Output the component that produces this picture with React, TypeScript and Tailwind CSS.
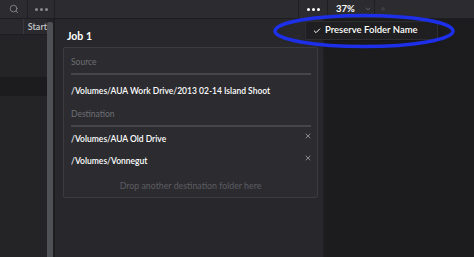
import { Search, ChevronDown, X, Check } from "lucide-react";

const font = { fontFamily: "Lato, 'Open Sans', sans-serif" };

function Dots({ className }: { className: string }) {
  return (
    <div className={`flex items-center gap-[2px] ${className}`}>
      <span className="w-[3px] h-[3px] rounded-full bg-current" />
      <span className="w-[3px] h-[3px] rounded-full bg-current" />
      <span className="w-[3px] h-[3px] rounded-full bg-current" />
    </div>
  );
}

export default function App() {
  return (
    <div className="relative w-[474px] h-[257px] overflow-hidden bg-[#1c1c1e] flex flex-col" style={font}>
      {/* top bar */}
      <div className="h-[19px] flex items-center bg-[#2c2c30] border-b border-[#1e1e21] shrink-0">
        <div className="w-[28px] h-full flex items-center justify-center border-r border-[#1f1f22]">
          <Search size={10} strokeWidth={2} className="text-[#8a8a90]" />
        </div>
        <div className="w-[27px] h-full flex items-center justify-center border-r border-[#1f1f22]">
          <Dots className="text-[#8a8a90]" />
        </div>
        <div className="flex-1" />
        <div className="w-[30px] h-full flex items-center justify-center border-l border-r border-[#1f1f22]">
          <Dots className="text-white" />
        </div>
        <div className="w-[47px] h-full flex items-center pl-[8px] gap-[9px] border-r border-[#1f1f22]">
          <span className="text-[9.5px] font-bold text-white">37%</span>
          <ChevronDown size={8} strokeWidth={2} className="text-[#7a7a80]" />
        </div>
        <div className="w-[99px] h-full flex items-center pl-[6px]">
          <span className="w-[4px] h-[4px] rounded-full bg-[#3c3c40]" />
        </div>
      </div>

      <div className="flex-1 flex">
        {/* left list */}
        <div className="w-[47px] flex flex-col bg-[#242427]">
          <div className="h-[16px] flex bg-[#2a2a2e] border-b border-[#1e1e21]">
            <div className="w-[24px] border-r border-[#38383c]" />
            <span className="pl-[4px] text-[9px] font-semibold text-[#c8c8cc] leading-[16px]">Start</span>
          </div>
          <div className="h-[42px]" />
          <div className="h-[19px] bg-[#1c1c1f]" />
        </div>
        {/* scrollbar */}
        <div className="w-[6px] bg-[#242427] pt-[3px] flex">
          <div className="flex-1 bg-[#505156] rounded-t-[2px]" />
        </div>
        <div className="w-[2px] bg-[#1e1e21]" />

        {/* middle panel */}
        <div className="w-[270px] bg-[#28282c] flex flex-col pl-[8px] pr-[5px] border-r-[2px] border-[#1f1f22]">
          <div className="h-[28px] flex items-center pl-[4px] pt-[8px]">
            <span className="text-[10.5px] font-bold text-white">Job 1</span>
          </div>
          <div className="h-[151px] bg-[#2c2c30] border border-[#3c3c40] rounded-[2px] px-[7px] flex flex-col">
            <div className="h-[25px] flex items-end pb-[4px] text-[8.5px] text-[#6e6e74]">Source</div>
            <div className="h-[2px] bg-[#46464a] mr-[-1px]" />
            <div className="h-[32px] flex items-center text-[8.5px] font-semibold text-white">
              /Volumes/AUA Work Drive/2013 02-14 Island Shoot
            </div>
            <div className="h-[15px] flex items-center text-[8.5px] text-[#6e6e74]">Destination</div>
            <div className="h-[2px] bg-[#46464a] mt-[3px] mr-[-1px]" />
            <div className="h-[22px] flex items-center justify-between text-[8.5px] font-semibold text-white">
              <span className="pt-[2px]">/Volumes/AUA Old Drive</span>
              <X size={8} strokeWidth={3} className="text-[#8a8a8e] mr-[-2px] mb-[5px]" />
            </div>
            <div className="h-[23px] flex items-center justify-between text-[8.5px] font-semibold text-white">
              <span className="pt-[2px]">/Volumes/Vonnegut</span>
              <X size={8} strokeWidth={3} className="text-[#8a8a8e] mr-[-2px] mb-[5px]" />
            </div>
            <div className="flex-1 flex items-center justify-center text-[8.8px] text-[#5c5c62] pt-[3px]">
              Drop another destination folder here
            </div>
          </div>
        </div>

        {/* right panel */}
        <div className="flex-1 bg-[#1c1c1e]" />
      </div>

      {/* dropdown menu */}
      <div className="absolute left-[305px] top-[21px] w-[133px] h-[19px] bg-[#1f1f21] border border-[#2e2e32] flex items-center pl-[7px] gap-[4px] shadow-md">
        <Check size={8} strokeWidth={3} className="text-white" />
        <span className="text-[9.5px] font-semibold text-white">Preserve Folder Name</span>
      </div>

      {/* annotation ellipse */}
      <svg className="absolute left-0 top-0 pointer-events-none" width="474" height="257">
        <ellipse cx="364" cy="31" rx="89" ry="15.5" fill="none" stroke="#1d2fe8" strokeWidth="3.5" />
      </svg>
    </div>
  );
}
